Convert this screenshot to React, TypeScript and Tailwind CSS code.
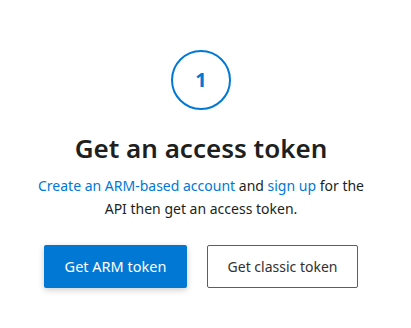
export default function App() {
  return (
    <div
      className="w-[411px] h-[328px] bg-white"
      style={{ fontFamily: '"Noto Sans", "Open Sans", sans-serif' }}
    >
      <div className="w-[402px] flex flex-col items-center pt-[50px] text-center">
        {/* Step badge */}
        <div className="w-[60px] h-[60px] rounded-full border-2 border-[#0078d4] flex items-center justify-center">
          <span className="text-[20px] font-bold text-[#0078d4] leading-none">1</span>
        </div>

        <h1 className="mt-[20px] text-[26px] leading-[36px] font-semibold text-[#201f1e]">
          Get an access token
        </h1>

        <p className="mt-[8px] w-[340px] text-[14px] leading-[23px] text-[#201f1e]">
          <a href="#" className="text-[#0078d4]">Create an ARM-based account</a> and{' '}
          <a href="#" className="text-[#0078d4]">sign up</a> for the API then get an access token.
        </p>

        <div className="mt-[25px] flex gap-[20px]">
          <button className="w-[143px] h-[43px] rounded-[2px] bg-[#0078d4] text-white text-[14.5px] shadow-[0_2px_6px_rgba(0,0,0,0.2)]">
            Get ARM token
          </button>
          <button className="w-[151px] h-[43px] rounded-[2px] border border-[#605e5c] bg-white text-[#323130] text-[14px]">
            Get classic token
          </button>
        </div>
      </div>
    </div>
  );
}
